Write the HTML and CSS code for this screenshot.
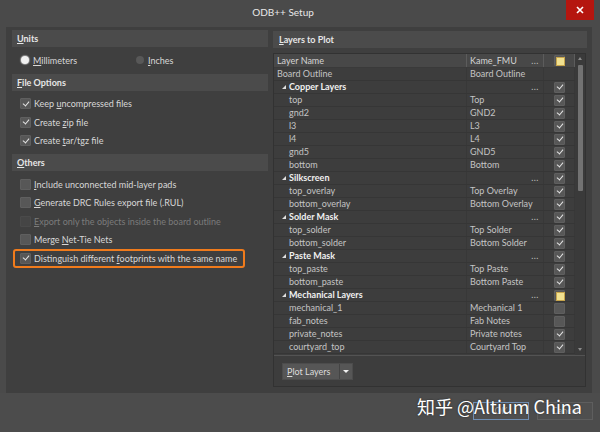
FILE: index.html
```html
<!DOCTYPE html>
<html>
<head>
<meta charset="utf-8">
<title>ODB++ Setup</title>
<link rel="stylesheet" href="styles.css">
</head>
<body>
<div class="window">
  <div class="titlebar">
    <div class="title">ODB++ Setup</div>
    <div class="close"><svg width="8" height="8" viewBox="0 0 8 8"><path d="M1 1 L7 7 M7 1 L1 7" stroke="#ffffff" stroke-width="1.6" fill="none"/></svg></div>
  </div>
  <div class="content">
    <div class="left">
      <div class="sec"><u>U</u>nits</div>
      <div class="group radios">
        <div class="opt"><span class="radio on"></span><span><u>M</u>illimeters</span></div>
        <div class="opt"><span class="radio"></span><span><u>I</u>nches</span></div>
      </div>
      <div class="sec"><u>F</u>ile Options</div>
      <div class="group">
        <div class="opt"><span class="cb on"></span><span>Keep <u>u</u>ncompressed files</span></div>
        <div class="opt"><span class="cb on"></span><span>Create <u>z</u>ip file</span></div>
        <div class="opt"><span class="cb on"></span><span>Create <u>t</u>ar/tgz file</span></div>
      </div>
      <div class="sec"><u>O</u>thers</div>
      <div class="group">
        <div class="opt"><span class="cb"></span><span><u>I</u>nclude unconnected mid-layer pads</span></div>
        <div class="opt"><span class="cb"></span><span><u>G</u>enerate DRC Rules export file (.RUL)</span></div>
        <div class="opt disabled"><span class="cb"></span><span><u>E</u>xport only the objects inside the board outline</span></div>
        <div class="opt"><span class="cb"></span><span>Merge <u>N</u>et-Tie Nets</span></div>
        <div class="opt hl"><span class="cb on"></span><span>Distinguish different <u>f</u>ootprints with the same name</span></div>
      </div>
    </div>
    <div class="right">
      <div class="sec"><u>L</u>ayers to Plot</div>
      <div class="box">
        <div class="tablewrap">
          <div class="grid">
            <div class="row head"><div class="c1">Layer Name</div><div class="c2"><span>Kame_FMU</span><span class="dots">...</span></div><div class="c3"><span class="cb part"></span></div></div>
            <div class="row"><div class="c1">Board Outline</div><div class="c2">Board Outline</div><div class="c3"></div></div>
            <div class="row grp"><div class="c1"><span class="tri"></span>Copper Layers</div><div class="c2"><span></span><span class="dots">...</span></div><div class="c3"><span class="cb on"></span></div></div>
            <div class="row ch"><div class="c1">top</div><div class="c2">Top</div><div class="c3"><span class="cb on"></span></div></div>
            <div class="row ch"><div class="c1">gnd2</div><div class="c2">GND2</div><div class="c3"><span class="cb on"></span></div></div>
            <div class="row ch"><div class="c1">l3</div><div class="c2">L3</div><div class="c3"><span class="cb on"></span></div></div>
            <div class="row ch"><div class="c1">l4</div><div class="c2">L4</div><div class="c3"><span class="cb on"></span></div></div>
            <div class="row ch"><div class="c1">gnd5</div><div class="c2">GND5</div><div class="c3"><span class="cb on"></span></div></div>
            <div class="row ch"><div class="c1">bottom</div><div class="c2">Bottom</div><div class="c3"><span class="cb on"></span></div></div>
            <div class="row grp"><div class="c1"><span class="tri"></span>Silkscreen</div><div class="c2"><span></span><span class="dots">...</span></div><div class="c3"><span class="cb on"></span></div></div>
            <div class="row ch"><div class="c1">top_overlay</div><div class="c2">Top Overlay</div><div class="c3"><span class="cb on"></span></div></div>
            <div class="row ch"><div class="c1">bottom_overlay</div><div class="c2">Bottom Overlay</div><div class="c3"><span class="cb on"></span></div></div>
            <div class="row grp"><div class="c1"><span class="tri"></span>Solder Mask</div><div class="c2"><span></span><span class="dots">...</span></div><div class="c3"><span class="cb on"></span></div></div>
            <div class="row ch"><div class="c1">top_solder</div><div class="c2">Top Solder</div><div class="c3"><span class="cb on"></span></div></div>
            <div class="row ch"><div class="c1">bottom_solder</div><div class="c2">Bottom Solder</div><div class="c3"><span class="cb on"></span></div></div>
            <div class="row grp"><div class="c1"><span class="tri"></span>Paste Mask</div><div class="c2"><span></span><span class="dots">...</span></div><div class="c3"><span class="cb on"></span></div></div>
            <div class="row ch"><div class="c1">top_paste</div><div class="c2">Top Paste</div><div class="c3"><span class="cb on"></span></div></div>
            <div class="row ch"><div class="c1">bottom_paste</div><div class="c2">Bottom Paste</div><div class="c3"><span class="cb on"></span></div></div>
            <div class="row grp"><div class="c1"><span class="tri"></span>Mechanical Layers</div><div class="c2"><span></span><span class="dots">...</span></div><div class="c3"><span class="cb part"></span></div></div>
            <div class="row ch"><div class="c1">mechanical_1</div><div class="c2">Mechanical 1</div><div class="c3"><span class="cb"></span></div></div>
            <div class="row ch"><div class="c1">fab_notes</div><div class="c2">Fab Notes</div><div class="c3"><span class="cb"></span></div></div>
            <div class="row ch"><div class="c1">private_notes</div><div class="c2">Private notes</div><div class="c3"><span class="cb on"></span></div></div>
            <div class="row ch"><div class="c1">courtyard_top</div><div class="c2">Courtyard Top</div><div class="c3"><span class="cb on"></span></div></div>
          </div>
          <div class="vscroll">
            <span class="arrow up"></span>
            <span class="thumb"></span>
            <span class="spacer"></span>
            <span class="arrow down"></span>
          </div>
        </div>
        <div class="btnrow">
          <div class="splitbtn"><span class="main"><u>P</u>lot Layers</span><span class="drop"><span class="dtri"></span></span></div>
        </div>
      </div>
    </div>
  </div>
  <div class="footer">
    <div class="btn ok">OK</div>
    <div class="btn">Cancel</div>
    <div class="watermark">知乎 @Altium China</div>
  </div>
</div>
</body>
</html>
```

FILE: styles.css
```css
* { box-sizing: border-box; }
html, body { margin: 0; padding: 0; }
body {
  width: 600px;
  height: 432px;
  overflow: hidden;
  background: #4a4a4a;
  font-family: Lato, "Noto Sans", sans-serif;
  font-size: 9px;
  color: #d8d8d8;
}
u { text-decoration: underline; text-underline-offset: 1px; }

.window { display: flex; flex-direction: column; height: 432px; }

.titlebar { height: 27px; display: flex; align-items: flex-start; }
.title { flex: 1; text-align: center; font-size: 10px; line-height: 25px; color: #e8e8e8; }
.close {
  width: 28px; height: 20px; margin-right: 6px;
  background: #b5160f;
  display: flex; align-items: center; justify-content: center;
}

.content {
  margin-left: 6px;
  width: 586px;
  height: 366px;
  background: #3f3f3f;
  display: flex;
  gap: 5px;
  padding: 3px 5px 0 6px;
}
.left { width: 256px; }
.right { width: 314px; }

.sec {
  height: 17px;
  line-height: 17px;
  background: #4b4b4b;
  padding-left: 5px;
  font-weight: bold;
  color: #e6e6e6;
}
.right .sec { margin-top: 1px; padding-left: 6px; }

.group { padding: 4px 0; }
.radios { display: grid; grid-template-columns: 115px auto; padding-left: 1px; }
.opt {
  display: flex;
  align-items: center;
  height: 18.5px;
  padding-left: 8px;
  gap: 3px;
  white-space: nowrap;
}
.radios .opt { gap: 4px; }
.opt.disabled { color: #7b7b7b; }
.opt.disabled .cb { background: #454545; border-color: #4a4a4a; }
.opt.hl {
  border: 2px solid #f07b1c;
  border-radius: 3px;
  margin-left: 1px;
  padding-left: 5px;
  width: 232px;
}

.radio {
  width: 8px; height: 8px; border-radius: 50%;
  background: #585858;
  flex: none;
}
.radio.on { background: #f0f0f0; box-shadow: 0 0 1px 1px #8a8a8a; }

.cb {
  position: relative;
  width: 11px; height: 11px;
  background: #575757;
  border: 1px solid #5f5f5f;
  border-radius: 1px;
  flex: none;
  display: inline-block;
}
.cb.on::after {
  content: "";
  position: absolute;
  left: 2px; top: 1.5px;
  width: 5px; height: 3px;
  border-left: 1.3px solid #e4e4e4;
  border-bottom: 1.3px solid #e4e4e4;
  transform: rotate(-50deg);
}
.cb.part::after {
  content: "";
  position: absolute;
  left: 1px; top: 1px;
  width: 7px; height: 7px;
  background: #f1e190;
  border: 1px solid #c7a54c;
}

.box {
  margin-top: 5px;
  border: 1px solid #323232;
  background: #3d3d3d;
  height: 334px;
  width: 313px;
}
.tablewrap {
  display: flex;
  height: 302px;
  border-bottom: 1px solid #535353;
}
.grid { width: 301px; }
.row {
  display: grid;
  grid-template-columns: 193px 77px 31px;
  height: 13px;
  line-height: 12px;
  border-bottom: 1px solid #363636;
  color: #c4c4c4;
}
.row > div { white-space: nowrap; overflow: hidden; border-right: 1px solid #383838; }
.c1 { padding-left: 3px; display: flex; align-items: center; }
.c2 { padding-left: 3px; padding-right: 4px; display: flex; justify-content: space-between; }
.c3 { display: flex; align-items: center; justify-content: center; }
.row.head {
  height: 14px;
  line-height: 13px;
  background: #484848;
  border-bottom: 1px solid #3a3a3a;
  color: #d4d4d4;
}
.row.head > div { border-right: 1px solid #5c5c5c; }
.row.head .c1 { padding-left: 3px; }
.row.ch .c1 { padding-left: 15px; }
.row.grp .c1 { padding-left: 8px; font-weight: bold; color: #f0f0f0; }
.dots { color: #bdbdbd; letter-spacing: 0.5px; }
.tri {
  width: 0; height: 0;
  border-left: 4px solid transparent;
  border-bottom: 4px solid #e0e0e0;
  margin-right: 3px;
  flex: none;
}

.vscroll {
  width: 10px;
  display: flex;
  flex-direction: column;
  align-items: center;
  background: #3a3a3a;
}
.arrow { width: 0; height: 0; border-left: 2.5px solid transparent; border-right: 2.5px solid transparent; }
.arrow.up { margin-top: 3px; border-bottom: 3px solid #8a8a8a; }
.arrow.down { margin-bottom: 4px; border-top: 3px solid #8a8a8a; }
.thumb { margin-top: 5px; width: 5px; height: 126px; background: #727272; border-radius: 1px; }
.spacer { flex: 1; }

.btnrow { padding: 7px 0 0 8px; }
.splitbtn { display: inline-flex; height: 17px; border: 1px solid #4c4c4c; background: #565656; color: #dcdcdc; }
.splitbtn .main { padding: 0 9px 0 4px; line-height: 15px; border-right: 1px solid #444; }
.splitbtn .drop { width: 12px; display: flex; align-items: center; justify-content: center; }
.dtri { width: 0; height: 0; border-left: 3px solid transparent; border-right: 3px solid transparent; border-top: 3px solid #f0f0f0; }

.footer {
  position: relative;
  flex: 1;
  display: flex;
  justify-content: flex-end;
  gap: 8px;
  padding: 9px 7px 0 0;
  background: #4c4c4c;
}
.btn {
  width: 56px; height: 18px;
  border: 1px solid #5e5e5e;
  background: #4f4f4f;
  color: #9a9a9a;
  text-align: center;
  line-height: 16px;
}
.btn.ok { border-color: #6f8eb3; }
.watermark {
  position: absolute;
  left: 417px;
  top: 4px;
  font-family: "Noto Sans CJK SC", "Noto Sans", sans-serif;
  font-size: 18px;
  line-height: 18px;
  color: #ffffff;
  text-shadow: 0 0 2px rgba(0,0,0,0.5);
  white-space: nowrap;
}
```
